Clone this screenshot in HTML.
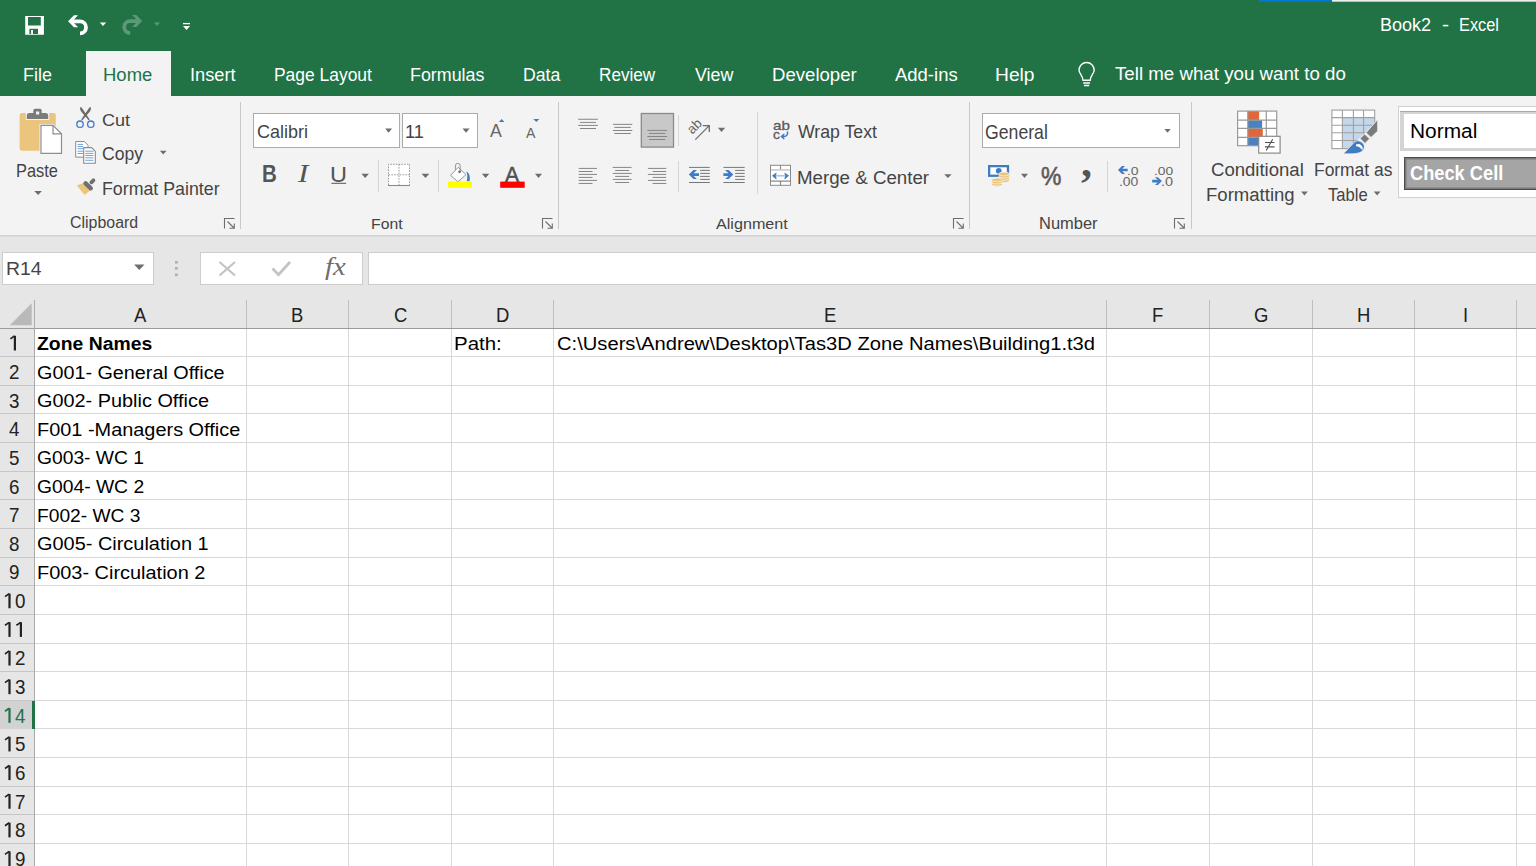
<!DOCTYPE html>
<html><head><meta charset="utf-8"><style>
html,body{margin:0;padding:0;width:1536px;height:866px;overflow:hidden;background:#fff}
body{position:relative;font-family:"Liberation Sans",sans-serif}
.r{position:absolute}
.t{position:absolute;white-space:nowrap;line-height:1;transform-origin:0 0}
</style></head><body>
<div class="r" style="left:0px;top:0px;width:1536px;height:96px;background:#217346;"></div>
<div class="t" style="left:1380.26px;top:15.46px;font-size:19.19px;font-family:'Liberation Sans',sans-serif;font-weight:normal;font-style:normal;color:#fff;transform:scaleX(0.9403);">Book2</div>
<div class="t" style="left:1441.84px;top:15.45px;font-size:19.20px;font-family:'Liberation Sans',sans-serif;font-weight:normal;font-style:normal;color:#fff;transform:scaleX(1.1054);">-</div>
<div class="t" style="left:1459.49px;top:15.46px;font-size:19.19px;font-family:'Liberation Sans',sans-serif;font-weight:normal;font-style:normal;color:#fff;transform:scaleX(0.8521);">Excel</div>
<div class="r" style="left:86px;top:51px;width:85px;height:46px;background:#f3f3f3;"></div>
<div class="t" style="left:1115.43px;top:65.31px;font-size:18.90px;font-family:'Liberation Sans',sans-serif;font-weight:normal;font-style:normal;color:#fff;transform:scaleX(0.9904);">Tell me what you want to do</div>
<div class="t" style="left:23.27px;top:66.21px;font-size:18.90px;font-family:'Liberation Sans',sans-serif;font-weight:normal;font-style:normal;color:#fff;transform:scaleX(0.9480);">File</div>
<div class="t" style="left:190.06px;top:66.21px;font-size:18.90px;font-family:'Liberation Sans',sans-serif;font-weight:normal;font-style:normal;color:#fff;transform:scaleX(0.9638);">Insert</div>
<div class="t" style="left:274.41px;top:66.21px;font-size:18.90px;font-family:'Liberation Sans',sans-serif;font-weight:normal;font-style:normal;color:#fff;transform:scaleX(0.9226);">Page Layout</div>
<div class="t" style="left:410.37px;top:66.21px;font-size:18.90px;font-family:'Liberation Sans',sans-serif;font-weight:normal;font-style:normal;color:#fff;transform:scaleX(0.9449);">Formulas</div>
<div class="t" style="left:522.89px;top:66.21px;font-size:18.90px;font-family:'Liberation Sans',sans-serif;font-weight:normal;font-style:normal;color:#fff;transform:scaleX(0.9359);">Data</div>
<div class="t" style="left:598.93px;top:66.21px;font-size:18.90px;font-family:'Liberation Sans',sans-serif;font-weight:normal;font-style:normal;color:#fff;transform:scaleX(0.9080);">Review</div>
<div class="t" style="left:695.01px;top:66.21px;font-size:18.90px;font-family:'Liberation Sans',sans-serif;font-weight:normal;font-style:normal;color:#fff;transform:scaleX(0.9450);">View</div>
<div class="t" style="left:771.51px;top:66.21px;font-size:18.90px;font-family:'Liberation Sans',sans-serif;font-weight:normal;font-style:normal;color:#fff;transform:scaleX(0.9837);">Developer</div>
<div class="t" style="left:894.80px;top:66.21px;font-size:18.90px;font-family:'Liberation Sans',sans-serif;font-weight:normal;font-style:normal;color:#fff;transform:scaleX(0.9780);">Add-ins</div>
<div class="t" style="left:994.86px;top:66.21px;font-size:18.90px;font-family:'Liberation Sans',sans-serif;font-weight:normal;font-style:normal;color:#fff;transform:scaleX(1.0174);">Help</div>
<div class="t" style="left:102.92px;top:65.63px;font-size:18.75px;font-family:'Liberation Sans',sans-serif;font-weight:normal;font-style:normal;color:#217346;transform:scaleX(0.9869);">Home</div>
<div class="r" style="left:0px;top:96px;width:1536px;height:139px;background:#f3f3f3;"></div>
<div class="r" style="left:0px;top:235px;width:1536px;height:1px;background:#d4d4d4;"></div>
<div class="r" style="left:240px;top:102px;width:1px;height:127px;background:#c8c8c8;"></div>
<div class="r" style="left:558px;top:102px;width:1px;height:127px;background:#c8c8c8;"></div>
<div class="r" style="left:969px;top:102px;width:1px;height:127px;background:#c8c8c8;"></div>
<div class="r" style="left:1191px;top:102px;width:1px;height:127px;background:#c8c8c8;"></div>
<div class="t" style="left:70.40px;top:215.49px;font-size:15.84px;font-family:'Liberation Sans',sans-serif;font-weight:normal;font-style:normal;color:#444444;transform:scaleX(1.0063);">Clipboard</div>
<div class="t" style="left:371.04px;top:216.30px;font-size:15.12px;font-family:'Liberation Sans',sans-serif;font-weight:normal;font-style:normal;color:#444444;transform:scaleX(1.0433);">Font</div>
<div class="t" style="left:715.70px;top:216.00px;font-size:15.12px;font-family:'Liberation Sans',sans-serif;font-weight:normal;font-style:normal;color:#444444;transform:scaleX(1.0683);">Alignment</div>
<div class="t" style="left:1038.58px;top:215.12px;font-size:16.28px;font-family:'Liberation Sans',sans-serif;font-weight:normal;font-style:normal;color:#444444;transform:scaleX(1.0120);">Number</div>
<div class="t" style="left:16.29px;top:161.62px;font-size:18.17px;font-family:'Liberation Sans',sans-serif;font-weight:normal;font-style:normal;color:#444444;transform:scaleX(0.9015);">Paste</div>
<div class="t" style="left:102.10px;top:112.40px;font-size:17.01px;font-family:'Liberation Sans',sans-serif;font-weight:normal;font-style:normal;color:#444444;transform:scaleX(1.0624);">Cut</div>
<div class="t" style="left:102.12px;top:146.21px;font-size:17.59px;font-family:'Liberation Sans',sans-serif;font-weight:normal;font-style:normal;color:#444444;transform:scaleX(1.0003);">Copy</div>
<div class="t" style="left:102.08px;top:180.89px;font-size:17.73px;font-family:'Liberation Sans',sans-serif;font-weight:normal;font-style:normal;color:#444444;transform:scaleX(1.0032);">Format Painter</div>
<div class="r" style="left:253px;top:113px;width:147px;height:35px;background:#fff;border:1px solid #ababab;box-sizing:border-box"></div>
<div class="r" style="left:402px;top:113px;width:76px;height:35px;background:#fff;border:1px solid #ababab;box-sizing:border-box"></div>
<div class="t" style="left:256.80px;top:123.12px;font-size:18.17px;font-family:'Liberation Sans',sans-serif;font-weight:normal;font-style:normal;color:#444444;transform:scaleX(0.9934);">Calibri</div>
<div class="t" style="left:405.34px;top:123.12px;font-size:18.17px;font-family:'Liberation Sans',sans-serif;font-weight:normal;font-style:normal;color:#444444;transform:scaleX(0.9985);">11</div>
<div class="t" style="left:489.60px;top:121.95px;font-size:18.60px;font-family:'Liberation Sans',sans-serif;font-weight:normal;font-style:normal;color:#666;transform:scaleX(0.9538);">A</div>
<div class="t" style="left:525.80px;top:125.64px;font-size:14.24px;font-family:'Liberation Sans',sans-serif;font-weight:normal;font-style:normal;color:#666;transform:scaleX(0.9924);">A</div>
<div class="t" style="left:262.47px;top:162.94px;font-size:23.11px;font-family:'Liberation Sans',sans-serif;font-weight:bold;font-style:normal;color:#555;transform:scaleX(0.8867);">B</div>
<div class="t" style="left:298.26px;top:162.17px;font-size:24.27px;font-family:'Liberation Serif',serif;font-weight:normal;font-style:italic;color:#555;transform:scaleX(1.2853);">I</div>
<div class="t" style="left:330.34px;top:163.01px;font-size:22.67px;font-family:'Liberation Sans',sans-serif;font-weight:normal;font-style:normal;color:#555;transform:scaleX(1.0368);">U</div>
<div class="r" style="left:378px;top:160px;width:1px;height:32px;background:#d5d5d5;"></div>
<div class="r" style="left:438px;top:160px;width:1px;height:32px;background:#d5d5d5;"></div>
<div class="t" style="left:505.30px;top:163.08px;font-size:22.82px;font-family:'Liberation Sans',sans-serif;font-weight:normal;font-style:normal;color:#505050;transform:scaleX(0.9292);-webkit-text-stroke:0.5px #505050;">A</div>
<div class="r" style="left:678px;top:115px;width:1px;height:31px;background:#d5d5d5;"></div>
<div class="t" style="left:687.3px;top:120.3px;font-size:13.5px;color:#666;transform:rotate(-45deg);transform-origin:7.25px 6.5px">ab</div>
<div class="r" style="left:678px;top:161px;width:1px;height:31px;background:#d5d5d5;"></div>
<div class="r" style="left:757px;top:112px;width:1px;height:82px;background:#d5d5d5;"></div>
<div class="t" style="left:798.21px;top:123.14px;font-size:18.02px;font-family:'Liberation Sans',sans-serif;font-weight:normal;font-style:normal;color:#444444;transform:scaleX(0.9813);">Wrap Text</div>
<div class="t" style="left:796.80px;top:168.93px;font-size:18.75px;font-family:'Liberation Sans',sans-serif;font-weight:normal;font-style:normal;color:#444444;transform:scaleX(0.9977);">Merge &amp; Center</div>
<div class="t" style="left:772.59px;top:118.70px;font-size:13.20px;font-family:'Liberation Sans',sans-serif;font-weight:normal;font-style:normal;color:#5a5a5a;transform:scaleX(1.1550);-webkit-text-stroke:0.3px #5a5a5a;">ab</div>
<div class="t" style="left:772.65px;top:127.78px;font-size:13.45px;font-family:'Liberation Sans',sans-serif;font-weight:normal;font-style:normal;color:#5a5a5a;transform:scaleX(1.0252);-webkit-text-stroke:0.3px #5a5a5a;">c</div>
<div class="r" style="left:982px;top:113px;width:198px;height:35px;background:#fff;border:1px solid #ababab;box-sizing:border-box"></div>
<div class="t" style="left:985.32px;top:121.73px;font-size:20.64px;font-family:'Liberation Sans',sans-serif;font-weight:normal;font-style:normal;color:#444444;transform:scaleX(0.8563);">General</div>
<div class="t" style="left:1040.90px;top:163.12px;font-size:26.29px;font-family:'Liberation Sans',sans-serif;font-weight:normal;font-style:normal;color:#5a5a5a;transform:scaleX(0.8722);-webkit-text-stroke:0.6px #5a5a5a;">%</div>
<div class="t" style="left:1080.94px;top:140.12px;font-size:43.00px;font-family:'Liberation Serif',serif;font-weight:bold;font-style:normal;color:#555;transform:scaleX(1.0256);">,</div>
<div class="r" style="left:1107px;top:161px;width:1px;height:31px;background:#d5d5d5;"></div>
<div class="t" style="left:1126.95px;top:164.69px;font-size:11.69px;font-family:'Liberation Sans',sans-serif;font-weight:normal;font-style:normal;color:#666;transform:scaleX(1.1928);">.0</div>
<div class="t" style="left:1119.25px;top:175.68px;font-size:12.39px;font-family:'Liberation Sans',sans-serif;font-weight:normal;font-style:normal;color:#666;transform:scaleX(1.1225);">.00</div>
<div class="t" style="left:1154.25px;top:164.69px;font-size:11.69px;font-family:'Liberation Sans',sans-serif;font-weight:normal;font-style:normal;color:#666;transform:scaleX(1.1834);">.00</div>
<div class="t" style="left:1161.39px;top:175.68px;font-size:12.39px;font-family:'Liberation Sans',sans-serif;font-weight:normal;font-style:normal;color:#666;transform:scaleX(1.1705);">.0</div>
<div class="t" style="left:1210.77px;top:161.17px;font-size:18.46px;font-family:'Liberation Sans',sans-serif;font-weight:normal;font-style:normal;color:#444444;transform:scaleX(1.0058);">Conditional</div>
<div class="t" style="left:1206.21px;top:185.87px;font-size:18.46px;font-family:'Liberation Sans',sans-serif;font-weight:normal;font-style:normal;color:#444444;transform:scaleX(1.0063);">Formatting</div>
<div class="t" style="left:1314.41px;top:161.17px;font-size:18.46px;font-family:'Liberation Sans',sans-serif;font-weight:normal;font-style:normal;color:#444444;transform:scaleX(0.9439);">Format as</div>
<div class="t" style="left:1328.17px;top:185.87px;font-size:18.46px;font-family:'Liberation Sans',sans-serif;font-weight:normal;font-style:normal;color:#444444;transform:scaleX(0.9017);">Table</div>
<div class="r" style="left:1398px;top:106px;width:138px;height:92px;background:#fff;border:1px solid #d0d0d0;border-right:none;box-sizing:border-box"></div>
<div class="r" style="left:1399.5px;top:110.7px;width:136.5px;height:40.8px;background:#d4d4d4;border-top:1px solid #a8a8a8;box-sizing:border-box"></div>
<div class="r" style="left:1404px;top:114.3px;width:132px;height:33.6px;background:#fff;"></div>
<div class="t" style="left:1409.53px;top:120.57px;font-size:20.35px;font-family:'Liberation Sans',sans-serif;font-weight:normal;font-style:normal;color:#000;transform:scaleX(1.0276);">Normal</div>
<div class="r" style="left:1404px;top:157px;width:132px;height:33px;background:#a5a5a5;border:1px solid #4a4a4a;border-right:none;box-sizing:border-box;box-shadow:inset 1.5px 1.5px 0 #7a7a7a,inset 0 -1.5px 0 #7a7a7a"></div>
<div class="t" style="left:1410.17px;top:162.36px;font-size:21.08px;font-family:'Liberation Sans',sans-serif;font-weight:bold;font-style:normal;color:#fff;transform:scaleX(0.8655);">Check Cell</div>
<div class="r" style="left:0px;top:236px;width:1536px;height:64px;background:#e6e6e6;"></div>
<div class="r" style="left:0px;top:236px;width:1536px;height:1px;background:#dcdcdc;"></div>
<div class="r" style="left:1.5px;top:252px;width:152px;height:33px;background:#fff;border:1px solid #cdcdcd;box-sizing:border-box"></div>
<div class="t" style="left:5.65px;top:260.41px;font-size:18.90px;font-family:'Liberation Sans',sans-serif;font-weight:normal;font-style:normal;color:#444444;transform:scaleX(1.0278);">R14</div>
<div class="r" style="left:199.5px;top:252px;width:163px;height:33px;background:#fff;border:1px solid #cdcdcd;box-sizing:border-box"></div>
<div class="t" style="left:324.71px;top:254.57px;font-size:24.35px;font-family:'Liberation Serif',serif;font-weight:normal;font-style:italic;color:#6f6f6f;transform:scaleX(1.1826);">fx</div>
<div class="r" style="left:368px;top:252px;width:1168px;height:33px;background:#fff;border:1px solid #cdcdcd;border-right:none;box-sizing:border-box"></div>
<div class="r" style="left:0px;top:300px;width:1536px;height:566px;background:#fff;"></div>
<div class="r" style="left:0px;top:300px;width:1536px;height:28px;background:#e6e6e6;"></div>
<div class="r" style="left:0px;top:328px;width:34px;height:538px;background:#e6e6e6;"></div>
<div class="r" style="left:34px;top:356px;width:1502px;height:1px;background:#d9d9d9;"></div>
<div class="r" style="left:0px;top:356px;width:34px;height:1px;background:#c6c6c6;"></div>
<div class="r" style="left:34px;top:385px;width:1502px;height:1px;background:#d9d9d9;"></div>
<div class="r" style="left:0px;top:385px;width:34px;height:1px;background:#c6c6c6;"></div>
<div class="r" style="left:34px;top:413px;width:1502px;height:1px;background:#d9d9d9;"></div>
<div class="r" style="left:0px;top:413px;width:34px;height:1px;background:#c6c6c6;"></div>
<div class="r" style="left:34px;top:442px;width:1502px;height:1px;background:#d9d9d9;"></div>
<div class="r" style="left:0px;top:442px;width:34px;height:1px;background:#c6c6c6;"></div>
<div class="r" style="left:34px;top:471px;width:1502px;height:1px;background:#d9d9d9;"></div>
<div class="r" style="left:0px;top:471px;width:34px;height:1px;background:#c6c6c6;"></div>
<div class="r" style="left:34px;top:499px;width:1502px;height:1px;background:#d9d9d9;"></div>
<div class="r" style="left:0px;top:499px;width:34px;height:1px;background:#c6c6c6;"></div>
<div class="r" style="left:34px;top:528px;width:1502px;height:1px;background:#d9d9d9;"></div>
<div class="r" style="left:0px;top:528px;width:34px;height:1px;background:#c6c6c6;"></div>
<div class="r" style="left:34px;top:557px;width:1502px;height:1px;background:#d9d9d9;"></div>
<div class="r" style="left:0px;top:557px;width:34px;height:1px;background:#c6c6c6;"></div>
<div class="r" style="left:34px;top:585px;width:1502px;height:1px;background:#d9d9d9;"></div>
<div class="r" style="left:0px;top:585px;width:34px;height:1px;background:#c6c6c6;"></div>
<div class="r" style="left:34px;top:614px;width:1502px;height:1px;background:#d9d9d9;"></div>
<div class="r" style="left:0px;top:614px;width:34px;height:1px;background:#c6c6c6;"></div>
<div class="r" style="left:34px;top:643px;width:1502px;height:1px;background:#d9d9d9;"></div>
<div class="r" style="left:0px;top:643px;width:34px;height:1px;background:#c6c6c6;"></div>
<div class="r" style="left:34px;top:671px;width:1502px;height:1px;background:#d9d9d9;"></div>
<div class="r" style="left:0px;top:671px;width:34px;height:1px;background:#c6c6c6;"></div>
<div class="r" style="left:34px;top:700px;width:1502px;height:1px;background:#d9d9d9;"></div>
<div class="r" style="left:0px;top:700px;width:34px;height:1px;background:#c6c6c6;"></div>
<div class="r" style="left:34px;top:728px;width:1502px;height:1px;background:#d9d9d9;"></div>
<div class="r" style="left:0px;top:728px;width:34px;height:1px;background:#c6c6c6;"></div>
<div class="r" style="left:34px;top:757px;width:1502px;height:1px;background:#d9d9d9;"></div>
<div class="r" style="left:0px;top:757px;width:34px;height:1px;background:#c6c6c6;"></div>
<div class="r" style="left:34px;top:786px;width:1502px;height:1px;background:#d9d9d9;"></div>
<div class="r" style="left:0px;top:786px;width:34px;height:1px;background:#c6c6c6;"></div>
<div class="r" style="left:34px;top:814px;width:1502px;height:1px;background:#d9d9d9;"></div>
<div class="r" style="left:0px;top:814px;width:34px;height:1px;background:#c6c6c6;"></div>
<div class="r" style="left:34px;top:843px;width:1502px;height:1px;background:#d9d9d9;"></div>
<div class="r" style="left:0px;top:843px;width:34px;height:1px;background:#c6c6c6;"></div>
<div class="r" style="left:34px;top:872px;width:1502px;height:1px;background:#d9d9d9;"></div>
<div class="r" style="left:0px;top:872px;width:34px;height:1px;background:#c6c6c6;"></div>
<div class="r" style="left:246px;top:300px;width:1px;height:28px;background:#bebebe;"></div>
<div class="r" style="left:246px;top:328px;width:1px;height:538px;background:#d9d9d9;"></div>
<div class="r" style="left:348px;top:300px;width:1px;height:28px;background:#bebebe;"></div>
<div class="r" style="left:348px;top:328px;width:1px;height:538px;background:#d9d9d9;"></div>
<div class="r" style="left:451px;top:300px;width:1px;height:28px;background:#bebebe;"></div>
<div class="r" style="left:451px;top:328px;width:1px;height:538px;background:#d9d9d9;"></div>
<div class="r" style="left:553px;top:300px;width:1px;height:28px;background:#bebebe;"></div>
<div class="r" style="left:553px;top:328px;width:1px;height:538px;background:#d9d9d9;"></div>
<div class="r" style="left:1106px;top:300px;width:1px;height:28px;background:#bebebe;"></div>
<div class="r" style="left:1106px;top:328px;width:1px;height:538px;background:#d9d9d9;"></div>
<div class="r" style="left:1209px;top:300px;width:1px;height:28px;background:#bebebe;"></div>
<div class="r" style="left:1209px;top:328px;width:1px;height:538px;background:#d9d9d9;"></div>
<div class="r" style="left:1312px;top:300px;width:1px;height:28px;background:#bebebe;"></div>
<div class="r" style="left:1312px;top:328px;width:1px;height:538px;background:#d9d9d9;"></div>
<div class="r" style="left:1414px;top:300px;width:1px;height:28px;background:#bebebe;"></div>
<div class="r" style="left:1414px;top:328px;width:1px;height:538px;background:#d9d9d9;"></div>
<div class="r" style="left:1516px;top:300px;width:1px;height:28px;background:#bebebe;"></div>
<div class="r" style="left:1516px;top:328px;width:1px;height:538px;background:#d9d9d9;"></div>
<div class="r" style="left:0px;top:328px;width:1536px;height:1px;background:#9b9b9b;"></div>
<div class="r" style="left:34px;top:300px;width:1px;height:566px;background:#ababab;"></div>
<div class="t" style="left:134.37px;top:305.35px;font-size:20.50px;font-family:'Liberation Sans',sans-serif;font-weight:normal;font-style:normal;color:#222;transform:scaleX(0.9000);">A</div>
<div class="t" style="left:291.34px;top:305.35px;font-size:20.50px;font-family:'Liberation Sans',sans-serif;font-weight:normal;font-style:normal;color:#222;transform:scaleX(0.9000);">B</div>
<div class="t" style="left:393.57px;top:305.35px;font-size:20.50px;font-family:'Liberation Sans',sans-serif;font-weight:normal;font-style:normal;color:#222;transform:scaleX(0.9000);">C</div>
<div class="t" style="left:495.79px;top:305.35px;font-size:20.50px;font-family:'Liberation Sans',sans-serif;font-weight:normal;font-style:normal;color:#222;transform:scaleX(0.9000);">D</div>
<div class="t" style="left:823.90px;top:305.35px;font-size:20.50px;font-family:'Liberation Sans',sans-serif;font-weight:normal;font-style:normal;color:#222;transform:scaleX(0.9000);">E</div>
<div class="t" style="left:1152.40px;top:305.35px;font-size:20.50px;font-family:'Liberation Sans',sans-serif;font-weight:normal;font-style:normal;color:#222;transform:scaleX(0.9000);">F</div>
<div class="t" style="left:1253.94px;top:305.35px;font-size:20.50px;font-family:'Liberation Sans',sans-serif;font-weight:normal;font-style:normal;color:#222;transform:scaleX(0.9000);">G</div>
<div class="t" style="left:1356.76px;top:305.35px;font-size:20.50px;font-family:'Liberation Sans',sans-serif;font-weight:normal;font-style:normal;color:#222;transform:scaleX(0.9000);">H</div>
<div class="t" style="left:1463.36px;top:305.35px;font-size:20.50px;font-family:'Liberation Sans',sans-serif;font-weight:normal;font-style:normal;color:#222;transform:scaleX(0.9000);">I</div>
<div class="r" style="left:0px;top:701px;width:34px;height:28px;background:#d2d2d2;"></div>
<div class="r" style="left:32px;top:701px;width:3px;height:28px;background:#217346;"></div>
<div class="t" style="left:8.89px;top:361.94px;font-size:20.20px;font-family:'Liberation Sans',sans-serif;font-weight:normal;font-style:normal;color:#222;transform:scaleX(0.9300);">2</div>
<div class="t" style="left:8.89px;top:390.58px;font-size:20.20px;font-family:'Liberation Sans',sans-serif;font-weight:normal;font-style:normal;color:#222;transform:scaleX(0.9300);">3</div>
<div class="t" style="left:8.98px;top:419.22px;font-size:20.20px;font-family:'Liberation Sans',sans-serif;font-weight:normal;font-style:normal;color:#222;transform:scaleX(0.9300);">4</div>
<div class="t" style="left:8.89px;top:447.86px;font-size:20.20px;font-family:'Liberation Sans',sans-serif;font-weight:normal;font-style:normal;color:#222;transform:scaleX(0.9300);">5</div>
<div class="t" style="left:8.79px;top:476.50px;font-size:20.20px;font-family:'Liberation Sans',sans-serif;font-weight:normal;font-style:normal;color:#222;transform:scaleX(0.9300);">6</div>
<div class="t" style="left:8.89px;top:505.14px;font-size:20.20px;font-family:'Liberation Sans',sans-serif;font-weight:normal;font-style:normal;color:#222;transform:scaleX(0.9300);">7</div>
<div class="t" style="left:8.84px;top:533.78px;font-size:20.20px;font-family:'Liberation Sans',sans-serif;font-weight:normal;font-style:normal;color:#222;transform:scaleX(0.9300);">8</div>
<div class="t" style="left:8.89px;top:562.42px;font-size:20.20px;font-family:'Liberation Sans',sans-serif;font-weight:normal;font-style:normal;color:#222;transform:scaleX(0.9300);">9</div>
<div class="t" style="left:14.84px;top:591.06px;font-size:20.20px;font-family:'Liberation Sans',sans-serif;font-weight:normal;font-style:normal;color:#222;transform:scaleX(0.9300);">0</div>
<div class="t" style="left:14.89px;top:648.34px;font-size:20.20px;font-family:'Liberation Sans',sans-serif;font-weight:normal;font-style:normal;color:#222;transform:scaleX(0.9300);">2</div>
<div class="t" style="left:14.89px;top:676.98px;font-size:20.20px;font-family:'Liberation Sans',sans-serif;font-weight:normal;font-style:normal;color:#222;transform:scaleX(0.9300);">3</div>
<div class="t" style="left:14.98px;top:705.62px;font-size:20.20px;font-family:'Liberation Sans',sans-serif;font-weight:normal;font-style:normal;color:#217346;transform:scaleX(0.9300);">4</div>
<div class="t" style="left:14.89px;top:734.26px;font-size:20.20px;font-family:'Liberation Sans',sans-serif;font-weight:normal;font-style:normal;color:#222;transform:scaleX(0.9300);">5</div>
<div class="t" style="left:14.79px;top:762.90px;font-size:20.20px;font-family:'Liberation Sans',sans-serif;font-weight:normal;font-style:normal;color:#222;transform:scaleX(0.9300);">6</div>
<div class="t" style="left:14.89px;top:791.54px;font-size:20.20px;font-family:'Liberation Sans',sans-serif;font-weight:normal;font-style:normal;color:#222;transform:scaleX(0.9300);">7</div>
<div class="t" style="left:14.84px;top:820.18px;font-size:20.20px;font-family:'Liberation Sans',sans-serif;font-weight:normal;font-style:normal;color:#222;transform:scaleX(0.9300);">8</div>
<div class="t" style="left:14.89px;top:848.82px;font-size:20.20px;font-family:'Liberation Sans',sans-serif;font-weight:normal;font-style:normal;color:#222;transform:scaleX(0.9300);">9</div>
<div class="t" style="left:37.32px;top:334.90px;font-size:18.90px;font-family:'Liberation Sans',sans-serif;font-weight:bold;font-style:normal;color:#000;transform:scaleX(1.0258);">Zone Names</div>
<div class="t" style="left:37.31px;top:363.54px;font-size:18.90px;font-family:'Liberation Sans',sans-serif;font-weight:normal;font-style:normal;color:#000;transform:scaleX(1.0469);">G001- General Office</div>
<div class="t" style="left:37.31px;top:392.18px;font-size:18.90px;font-family:'Liberation Sans',sans-serif;font-weight:normal;font-style:normal;color:#000;transform:scaleX(1.0520);">G002- Public Office</div>
<div class="t" style="left:36.71px;top:420.82px;font-size:18.90px;font-family:'Liberation Sans',sans-serif;font-weight:normal;font-style:normal;color:#000;transform:scaleX(1.0540);">F001 -Managers Office</div>
<div class="t" style="left:37.34px;top:449.46px;font-size:18.90px;font-family:'Liberation Sans',sans-serif;font-weight:normal;font-style:normal;color:#000;transform:scaleX(1.0194);">G003- WC 1</div>
<div class="t" style="left:37.34px;top:478.10px;font-size:18.90px;font-family:'Liberation Sans',sans-serif;font-weight:normal;font-style:normal;color:#000;transform:scaleX(1.0204);">G004- WC 2</div>
<div class="t" style="left:36.76px;top:506.74px;font-size:18.90px;font-family:'Liberation Sans',sans-serif;font-weight:normal;font-style:normal;color:#000;transform:scaleX(1.0160);">F002- WC 3</div>
<div class="t" style="left:37.30px;top:535.38px;font-size:18.90px;font-family:'Liberation Sans',sans-serif;font-weight:normal;font-style:normal;color:#000;transform:scaleX(1.0545);">G005- Circulation 1</div>
<div class="t" style="left:36.70px;top:564.02px;font-size:18.90px;font-family:'Liberation Sans',sans-serif;font-weight:normal;font-style:normal;color:#000;transform:scaleX(1.0550);">F003- Circulation 2</div>
<div class="t" style="left:454.16px;top:334.90px;font-size:18.90px;font-family:'Liberation Sans',sans-serif;font-weight:normal;font-style:normal;color:#000;transform:scaleX(1.0827);">Path:</div>
<div class="t" style="left:556.69px;top:334.90px;font-size:18.90px;font-family:'Liberation Sans',sans-serif;font-weight:normal;font-style:normal;color:#000;transform:scaleX(1.0676);">C:\Users\Andrew\Desktop\Tas3D Zone Names\Building1.t3d</div>
<svg style="position:absolute;left:0;top:0" width="1536" height="866" viewBox="0 0 1536 866">
<rect x="1259" y="0" width="73" height="1.7" fill="#0078d7"/><rect x="1332" y="0" width="204" height="1.7" fill="#efecec"/>
<path fill="#fff" fill-rule="evenodd" d="M25.2 16.1H43.9V34.8H25.2Z M28 16.9V25.6H40.8V16.9Z M29.4 28.7V34H31.1V29.9H33V34H38V28.7Z"/>
<g><path d="M68.1 21.3L73.9 15.2H78.1L72.3 21.3L78.1 27.3H73.9Z" fill="#fff"/><path d="M72 21.4H80A6 6 0 0 1 80 33.4" fill="none" stroke="#fff" stroke-width="3.8"/></g>
<path d="M99.8 22.5H106.2L103.0 26.1Z" fill="#fff"/>
<g opacity="0.27" transform="translate(210.2,-0.3) scale(-1,1)"><path d="M68.1 21.3L73.9 15.2H78.1L72.3 21.3L78.1 27.3H73.9Z" fill="#fff"/><path d="M72 21.4H80A6 6 0 0 1 80 33.4" fill="none" stroke="#fff" stroke-width="3.8"/></g>
<path d="M154 22.5H160L157.0 26.1Z" fill="rgba(255,255,255,0.27)"/>
<rect x="183" y="22.950000000000003" width="7" height="1.3" fill="#fff"/>
<path d="M183 26.1H190L186.5 30Z" fill="#fff"/>
<g fill="none" stroke="#fff" stroke-width="1.4"><path d="M1083 80.3C1083 76 1079 73.7 1079 70A7.6 7.6 0 0 1 1094.2 70C1094.2 73.7 1090.2 76 1090.2 80.3Z"/><path d="M1083.2 83H1090M1084 85.5H1089.2"/></g>
<path d="M224.5 228.5V218.5H234.5" stroke="#6d6d6d" stroke-width="1.1" fill="none"/><path d="M227.5 221.5L234 228M229.5 228.3H234.3V223.5" stroke="#6d6d6d" stroke-width="1.1" fill="none"/>
<path d="M542.5 228.5V218.5H552.5" stroke="#6d6d6d" stroke-width="1.1" fill="none"/><path d="M545.5 221.5L552 228M547.5 228.3H552.3V223.5" stroke="#6d6d6d" stroke-width="1.1" fill="none"/>
<path d="M953.5 228.5V218.5H963.5" stroke="#6d6d6d" stroke-width="1.1" fill="none"/><path d="M956.5 221.5L963 228M958.5 228.3H963.3V223.5" stroke="#6d6d6d" stroke-width="1.1" fill="none"/>
<path d="M1174.5 228.5V218.5H1184.5" stroke="#6d6d6d" stroke-width="1.1" fill="none"/><path d="M1177.5 221.5L1184 228M1179.5 228.3H1184.3V223.5" stroke="#6d6d6d" stroke-width="1.1" fill="none"/>
<rect x="19.6" y="113" width="36.2" height="37.8" rx="2.2" fill="#ebc57e"/>
<rect x="25.8" y="112" width="23.4" height="8" fill="#f3f3f3"/>
<path fill="#7b7b7b" d="M26.8 119V115.5Q26.8 113 29 113H33.3V110.5Q33.3 108.7 35 108.7H40Q41.7 108.7 41.7 110.5V113H46Q48.2 113 48.2 115.5V119Z"/>
<rect x="36" y="111.5" width="3.2" height="3" fill="#f3f3f3"/>
<path d="M39.5 123.9H53.4L63 133.3V154.9H39.5Z" fill="#f3f3f3"/>
<path d="M41 125.4H53L61.5 133.8V153.4H41Z" fill="#fff" stroke="#8f8f8f" stroke-width="1.2"/>
<path d="M53 125.4V133.8H61.5" fill="none" stroke="#8f8f8f" stroke-width="1.2"/>
<path d="M34.3 191H41.9L38.099999999999994 195Z" fill="#6d6d6d"/>
<g fill="#6a6a6a"><path d="M80 107.3Q80.8 107 81.6 107.6L89.8 119.4L88.6 120.3L81.5 112Q79.8 110 80 107.3Z"/><path d="M91 107.3Q90.2 107 89.4 107.6L81.2 119.4L82.4 120.3L89.5 112Q91.2 110 91 107.3Z"/></g>
<g fill="none" stroke="#3f7cc4" stroke-width="1.3"><circle cx="80" cy="124.2" r="3.2"/><circle cx="90.8" cy="124.2" r="3.2"/></g>
<path d="M75.7 141.5H84.4L88 145.3V157.1H75.7Z" fill="#fff" stroke="#8a8a8a" stroke-width="1"/>
<g stroke="#3f7cc4" stroke-opacity="0.8" stroke-width="0.9"><path d="M77.6 144.4H83"/><path d="M77.6 146.5H83"/><path d="M77.6 148.6H83"/><path d="M77.6 151.2H83"/><path d="M77.6 153.5H83"/></g>
<path d="M83.7 147.6H91.6L95.3 151.4V163.2H83.7Z" fill="#fff" stroke="#8a8a8a" stroke-width="1.1"/>
<g stroke="#3f7cc4" stroke-opacity="0.8" stroke-width="0.9"><path d="M85.3 151.2H93.4"/><path d="M85.3 153.4H93.4"/><path d="M85.3 155.5H93.4"/><path d="M85.3 157.8H93.4"/><path d="M85.3 160.3H93.4"/></g>
<path d="M159.9 150.8H166.6L163.25 154.4Z" fill="#6d6d6d"/>
<path d="M76.8 185.3L83.7 182.9L90.1 190.4L84.5 194.9Z" fill="#ebc57e"/>
<path d="M85.6 183.3L90.8 188.3" stroke="#707070" stroke-width="4.4" stroke-linecap="round"/>
<path d="M91.4 182.3L93.4 180.3" stroke="#707070" stroke-width="3.8" stroke-linecap="round"/>
<path d="M385.2 128.5H392L388.6 132.7Z" fill="#6d6d6d"/>
<path d="M462.5 128.5H469.6L466.05 132.7Z" fill="#6d6d6d"/>
<path d="M498.9 122.1H504.4L501.65 118.9Z" fill="#3f7cc4"/>
<path d="M533.3 118.9H539.3L536.3 122.1Z" fill="#3f7cc4"/>
<rect x="331.4" y="182.8" width="14.700000000000045" height="1" fill="#555"/>
<path d="M361.4 173.75H368.9L365.15 177.9Z" fill="#6d6d6d"/>
<rect x="388.5" y="164.3" width="21" height="21" fill="#fff"/>
<g fill="none" stroke="#9a9a9a" stroke-width="1" stroke-dasharray="1.6 1.2"><path d="M388.5 185V164.3H409.5V185M399 164.3V185.5M388.5 174.8H409.5"/></g>
<path d="M388 185.5H410" stroke="#8a8a8a" stroke-width="1.1"/>
<path d="M421.6 173.75H429.3L425.45000000000005 177.9Z" fill="#6d6d6d"/>
<path d="M450.6 175.3L458.2 167.3L466 174.6L458 181.8Z" fill="#fff" stroke="#8a8a8a" stroke-width="0.9"/>
<path d="M455.4 169.8V166Q455.4 163.3 457.8 163.3Q460.2 163.3 460.2 166V171.6" fill="none" stroke="#8a8a8a" stroke-width="0.9"/>
<circle cx="459.6" cy="171.8" r="1.4" fill="#6d6d6d"/>
<path d="M466.3 171.2Q470.8 173.5 469.6 181.2H466.8Q468 175 466.3 171.2Z" fill="#3f7cc4"/>
<rect x="447.9" y="181.6" width="24" height="6.2" fill="#ffff00"/>
<path d="M481.9 173.75H489.3L485.6 178Z" fill="#6d6d6d"/>
<rect x="500.2" y="181.6" width="24.5" height="6.2" fill="#ff0000"/>
<path d="M535 173.75H542L538.5 178Z" fill="#6d6d6d"/>
<rect x="578.1" y="118.75" width="19.799999999999955" height="1" fill="#858585"/>
<rect x="579.9" y="121.9" width="16.100000000000023" height="1" fill="#858585"/>
<rect x="578.1" y="124.9" width="19.799999999999955" height="1" fill="#858585"/>
<rect x="579.9" y="128.0" width="16.100000000000023" height="1" fill="#858585"/>
<rect x="612.9" y="123.85" width="19.399999999999977" height="1" fill="#858585"/>
<rect x="614.3" y="126.9" width="16.600000000000023" height="1" fill="#858585"/>
<rect x="612.9" y="130.0" width="19.399999999999977" height="1" fill="#858585"/>
<rect x="614.3" y="133.0" width="16.600000000000023" height="1" fill="#858585"/>
<rect x="641.3" y="113.5" width="32.2" height="33.6" fill="#c8c8c8" stroke="#8a8a8a" stroke-width="1.3"/>
<rect x="647.3" y="129.9" width="19.800000000000068" height="1" fill="#858585"/>
<rect x="649" y="132.9" width="16.299999999999955" height="1" fill="#858585"/>
<rect x="647.3" y="136.0" width="19.800000000000068" height="1" fill="#858585"/>
<rect x="649" y="139.0" width="16.299999999999955" height="1" fill="#858585"/>
<path d="M695.3 139.6L709 125.9M702.8 125.6H709.3V132.1" fill="none" stroke="#6d6d6d" stroke-width="1.3"/>
<path d="M717.9 127.8H725.2L721.55 132Z" fill="#6d6d6d"/>
<rect x="578.7" y="167.9" width="18.299999999999955" height="1" fill="#858585"/>
<rect x="578.7" y="171.0" width="13.799999999999955" height="1" fill="#858585"/>
<rect x="578.7" y="173.9" width="18.299999999999955" height="1" fill="#858585"/>
<rect x="578.7" y="176.9" width="13.799999999999955" height="1" fill="#858585"/>
<rect x="578.7" y="179.9" width="18.299999999999955" height="1" fill="#858585"/>
<rect x="578.7" y="182.95" width="13.799999999999955" height="1" fill="#858585"/>
<rect x="612.7" y="166.9" width="18.899999999999977" height="1" fill="#858585"/>
<rect x="615.2" y="170.0" width="13.899999999999977" height="1" fill="#858585"/>
<rect x="612.7" y="172.9" width="18.899999999999977" height="1" fill="#858585"/>
<rect x="615.2" y="175.9" width="13.899999999999977" height="1" fill="#858585"/>
<rect x="612.7" y="178.9" width="18.899999999999977" height="1" fill="#858585"/>
<rect x="615.2" y="182.0" width="13.899999999999977" height="1" fill="#858585"/>
<rect x="647.9" y="167.9" width="18.300000000000068" height="1" fill="#858585"/>
<rect x="652.6" y="171.0" width="13.600000000000023" height="1" fill="#858585"/>
<rect x="647.9" y="173.9" width="18.300000000000068" height="1" fill="#858585"/>
<rect x="652.6" y="176.9" width="13.600000000000023" height="1" fill="#858585"/>
<rect x="647.9" y="179.9" width="18.300000000000068" height="1" fill="#858585"/>
<rect x="652.6" y="182.95" width="13.600000000000023" height="1" fill="#858585"/>
<rect x="689" y="166.9" width="20.799999999999955" height="1" fill="#777"/>
<rect x="689" y="182.0" width="20.799999999999955" height="1" fill="#777"/>
<rect x="700.1" y="169.9" width="9.699999999999932" height="1" fill="#777"/>
<rect x="700.1" y="172.9" width="9.699999999999932" height="1" fill="#777"/>
<rect x="700.1" y="175.9" width="9.699999999999932" height="1" fill="#777"/>
<rect x="700.1" y="178.9" width="9.699999999999932" height="1" fill="#777"/>
<path d="M688.8 174.6L693.5 170.1H697L693.6 173.2H699V176H693.6L697 179.1H693.5Z" fill="#3f7cc4"/>
<rect x="723.4" y="166.9" width="21.300000000000068" height="1" fill="#777"/>
<rect x="723.4" y="182.0" width="21.300000000000068" height="1" fill="#777"/>
<rect x="735.1" y="169.9" width="9.600000000000023" height="1" fill="#777"/>
<rect x="735.1" y="172.9" width="9.600000000000023" height="1" fill="#777"/>
<rect x="735.1" y="175.9" width="9.600000000000023" height="1" fill="#777"/>
<rect x="735.1" y="178.9" width="9.600000000000023" height="1" fill="#777"/>
<path d="M733.3 174.6L728.6 170.1H725.1L728.5 173.2H723.4V176H728.5L725.1 179.1H728.6Z" fill="#3f7cc4"/>
<path d="M787.5 131.5Q788.5 137 782 136.6M784.3 134L781.5 136.6L784.3 139" fill="none" stroke="#3f7cc4" stroke-width="1.6"/>
<rect x="770.5" y="165.3" width="20" height="20" fill="#fff" stroke="#8a8a8a" stroke-width="1"/>
<path d="M770.5 181.2H790.5M780.5 165.3V169.4M780.5 181.2V185.3" stroke="#8a8a8a" stroke-width="1.2"/>
<rect x="771" y="169.2" width="19" height="1.5" fill="#c8c8c8"/>
<path d="M775 175.75H785.5" stroke="#a9c7e8" stroke-width="1.7"/>
<path d="M772.4 175.75L776.2 173.1L775.3 175.75L776.2 178.9Z M788.6 175.75L784.8 173.1L785.7 175.75L784.8 178.9Z" fill="#3f7cc4" stroke="#3f7cc4" stroke-width="0.8" stroke-linejoin="round"/>
<path d="M944.2 174.2H951.7L947.95 178.1Z" fill="#6d6d6d"/>
<path d="M1164.4 129H1170.7L1167.5500000000002 132.7Z" fill="#6d6d6d"/>
<rect x="988" y="165" width="21.1" height="11.9" fill="#3f7cc4"/>
<path d="M990.3 167.3H1006.8V174.6H990.3Z" fill="#fff"/>
<circle cx="998.75" cy="170.8" r="2.9" fill="#3f7cc4"/>
<g fill="#ebc57e" stroke="#f3f3f3" stroke-width="0.7"><ellipse cx="1004" cy="180.6" rx="5.3" ry="1.9"/><ellipse cx="1004" cy="178.4" rx="5.3" ry="1.9"/><ellipse cx="1004" cy="176.2" rx="5.3" ry="1.9"/><ellipse cx="1004" cy="174" rx="5.3" ry="1.9"/><ellipse cx="997" cy="184.3" rx="5.3" ry="1.9"/><ellipse cx="997" cy="182.1" rx="5.3" ry="1.9"/><ellipse cx="997" cy="179.9" rx="5.3" ry="1.9"/></g>
<path d="M1021 173.75H1028L1024.5 178Z" fill="#6d6d6d"/>
<path d="M1118 170L1122 166.1H1125L1122.2 168.7H1127.7V171.3H1122.2L1125 173.9H1122Z" fill="#3f7cc4"/>
<path d="M1161.9 181.1L1157.9 177.2H1154.9L1157.7 179.8H1152.2V182.4H1157.7L1154.9 185H1157.9Z" fill="#3f7cc4"/>
<path d="M1301.1 191.6H1307.8L1304.4499999999998 195.4Z" fill="#6d6d6d"/>
<path d="M1373.8 191.6H1380.5L1377.15 195.4Z" fill="#6d6d6d"/>
<rect x="1237.6" y="111.1" width="39.1" height="34.6" fill="#fff"/>
<rect x="1247.8" y="111.1" width="11.3" height="9.1" fill="#e0663c"/><rect x="1247.8" y="120.2" width="14.3" height="8.2" fill="#4a82c0"/><rect x="1247.8" y="128.4" width="15" height="8.9" fill="#e0663c"/><rect x="1247.8" y="137.3" width="14.3" height="8.4" fill="#4a82c0"/>
<g fill="none" stroke="#9a9a9a" stroke-width="1.2"><rect x="1237.6" y="111.1" width="39.1" height="34.6"/><path d="M1247.8 111.1V145.7M1266.3 111.1V145.7M1237.6 120.2H1276.7M1237.6 128.4H1276.7M1237.6 137.3H1276.7"/></g>
<rect x="1258.7" y="136.3" width="21.4" height="16.8" fill="#fff" stroke="#8a8a8a" stroke-width="1.2"/>
<path d="M1264.9 142.5H1274.5M1264.9 146.8H1274.5M1266.2 150.5L1272.7 139.2" stroke="#555" stroke-width="1.2"/>
<rect x="1331.9" y="110.1" width="42.8" height="38.5" fill="#fff"/>
<rect x="1342.4" y="117.6" width="32.3" height="31" fill="#c5d7ea"/>
<g fill="none" stroke="#a0a0a0" stroke-width="1.1"><rect x="1331.9" y="110.1" width="42.8" height="38.5"/><path d="M1342.4 110.1V148.6M1353.4 110.1V148.6M1363.6 110.1V148.6M1331.9 117.6H1374.7M1331.9 125.3H1374.7M1331.9 132.8H1374.7M1331.9 140.5H1374.7"/></g>
<path d="M1380 118L1380 150L1348 150Z" fill="#f3f3f3"/>
<path d="M1377.7 119.5V131.1L1371 137.5L1366 132.7Z" fill="#7b7b7b" stroke="#f3f3f3" stroke-width="0.8"/>
<path d="M1364.6 134L1369.6 138.8L1365 143.4L1360 138.6Z" fill="#7b7b7b" stroke="#f3f3f3" stroke-width="0.8"/>
<path d="M1343.4 153.8L1353.5 143.2A6 6 0 0 1 1363.6 149.5Q1361 153.8 1351 153.8Z" fill="#3f7cc4" stroke="#f3f3f3" stroke-width="0.6"/>
<path d="M1356 144.6A4.4 4.4 0 0 1 1362.2 150.3Q1360.5 146.5 1356 146.2Z" fill="#fff"/>
<path d="M134.1 264.4H144.5L139.3 270Z" fill="#707070"/>
<rect x="175" y="261" width="2.8" height="2.6" fill="#b0b0b0"/>
<rect x="175" y="267" width="2.8" height="2.6" fill="#b0b0b0"/>
<rect x="175" y="273.5" width="2.8" height="2.6" fill="#b0b0b0"/>
<path d="M219.5 262L235 275.5M219.5 275.5L235 262" stroke="#c3c3c3" stroke-width="2.2"/>
<path d="M272.5 268.5L278.5 274.8L290 262" fill="none" stroke="#c3c3c3" stroke-width="2.8"/>
<path d="M9.8 325.2L31.7 303.3V325.2Z" fill="#b9b9b9"/>
<path d="M10.40 338.90Q12.60 337.40 14.50 335.90" fill="none" stroke="#222" stroke-width="1.7"/>
<rect x="13.80" y="335.80" width="2.2" height="14.7" fill="#222"/>
<path d="M5.00 596.66Q7.20 595.16 9.10 593.66" fill="none" stroke="#222" stroke-width="1.7"/>
<rect x="8.40" y="593.56" width="2.2" height="14.7" fill="#222"/>
<path d="M5.00 625.30Q7.20 623.80 9.10 622.30" fill="none" stroke="#222" stroke-width="1.7"/>
<rect x="8.40" y="622.20" width="2.2" height="14.7" fill="#222"/>
<path d="M16.40 625.30Q18.60 623.80 20.50 622.30" fill="none" stroke="#222" stroke-width="1.7"/>
<rect x="19.80" y="622.20" width="2.2" height="14.7" fill="#222"/>
<path d="M5.00 653.94Q7.20 652.44 9.10 650.94" fill="none" stroke="#222" stroke-width="1.7"/>
<rect x="8.40" y="650.84" width="2.2" height="14.7" fill="#222"/>
<path d="M5.00 682.58Q7.20 681.08 9.10 679.58" fill="none" stroke="#222" stroke-width="1.7"/>
<rect x="8.40" y="679.48" width="2.2" height="14.7" fill="#222"/>
<path d="M5.00 711.22Q7.20 709.72 9.10 708.22" fill="none" stroke="#217346" stroke-width="1.7"/>
<rect x="8.40" y="708.12" width="2.2" height="14.7" fill="#217346"/>
<path d="M5.00 739.86Q7.20 738.36 9.10 736.86" fill="none" stroke="#222" stroke-width="1.7"/>
<rect x="8.40" y="736.76" width="2.2" height="14.7" fill="#222"/>
<path d="M5.00 768.50Q7.20 767.00 9.10 765.50" fill="none" stroke="#222" stroke-width="1.7"/>
<rect x="8.40" y="765.40" width="2.2" height="14.7" fill="#222"/>
<path d="M5.00 797.14Q7.20 795.64 9.10 794.14" fill="none" stroke="#222" stroke-width="1.7"/>
<rect x="8.40" y="794.04" width="2.2" height="14.7" fill="#222"/>
<path d="M5.00 825.78Q7.20 824.28 9.10 822.78" fill="none" stroke="#222" stroke-width="1.7"/>
<rect x="8.40" y="822.68" width="2.2" height="14.7" fill="#222"/>
<path d="M5.00 854.42Q7.20 852.92 9.10 851.42" fill="none" stroke="#222" stroke-width="1.7"/>
<rect x="8.40" y="851.32" width="2.2" height="14.7" fill="#222"/>
</svg>
</body></html>
